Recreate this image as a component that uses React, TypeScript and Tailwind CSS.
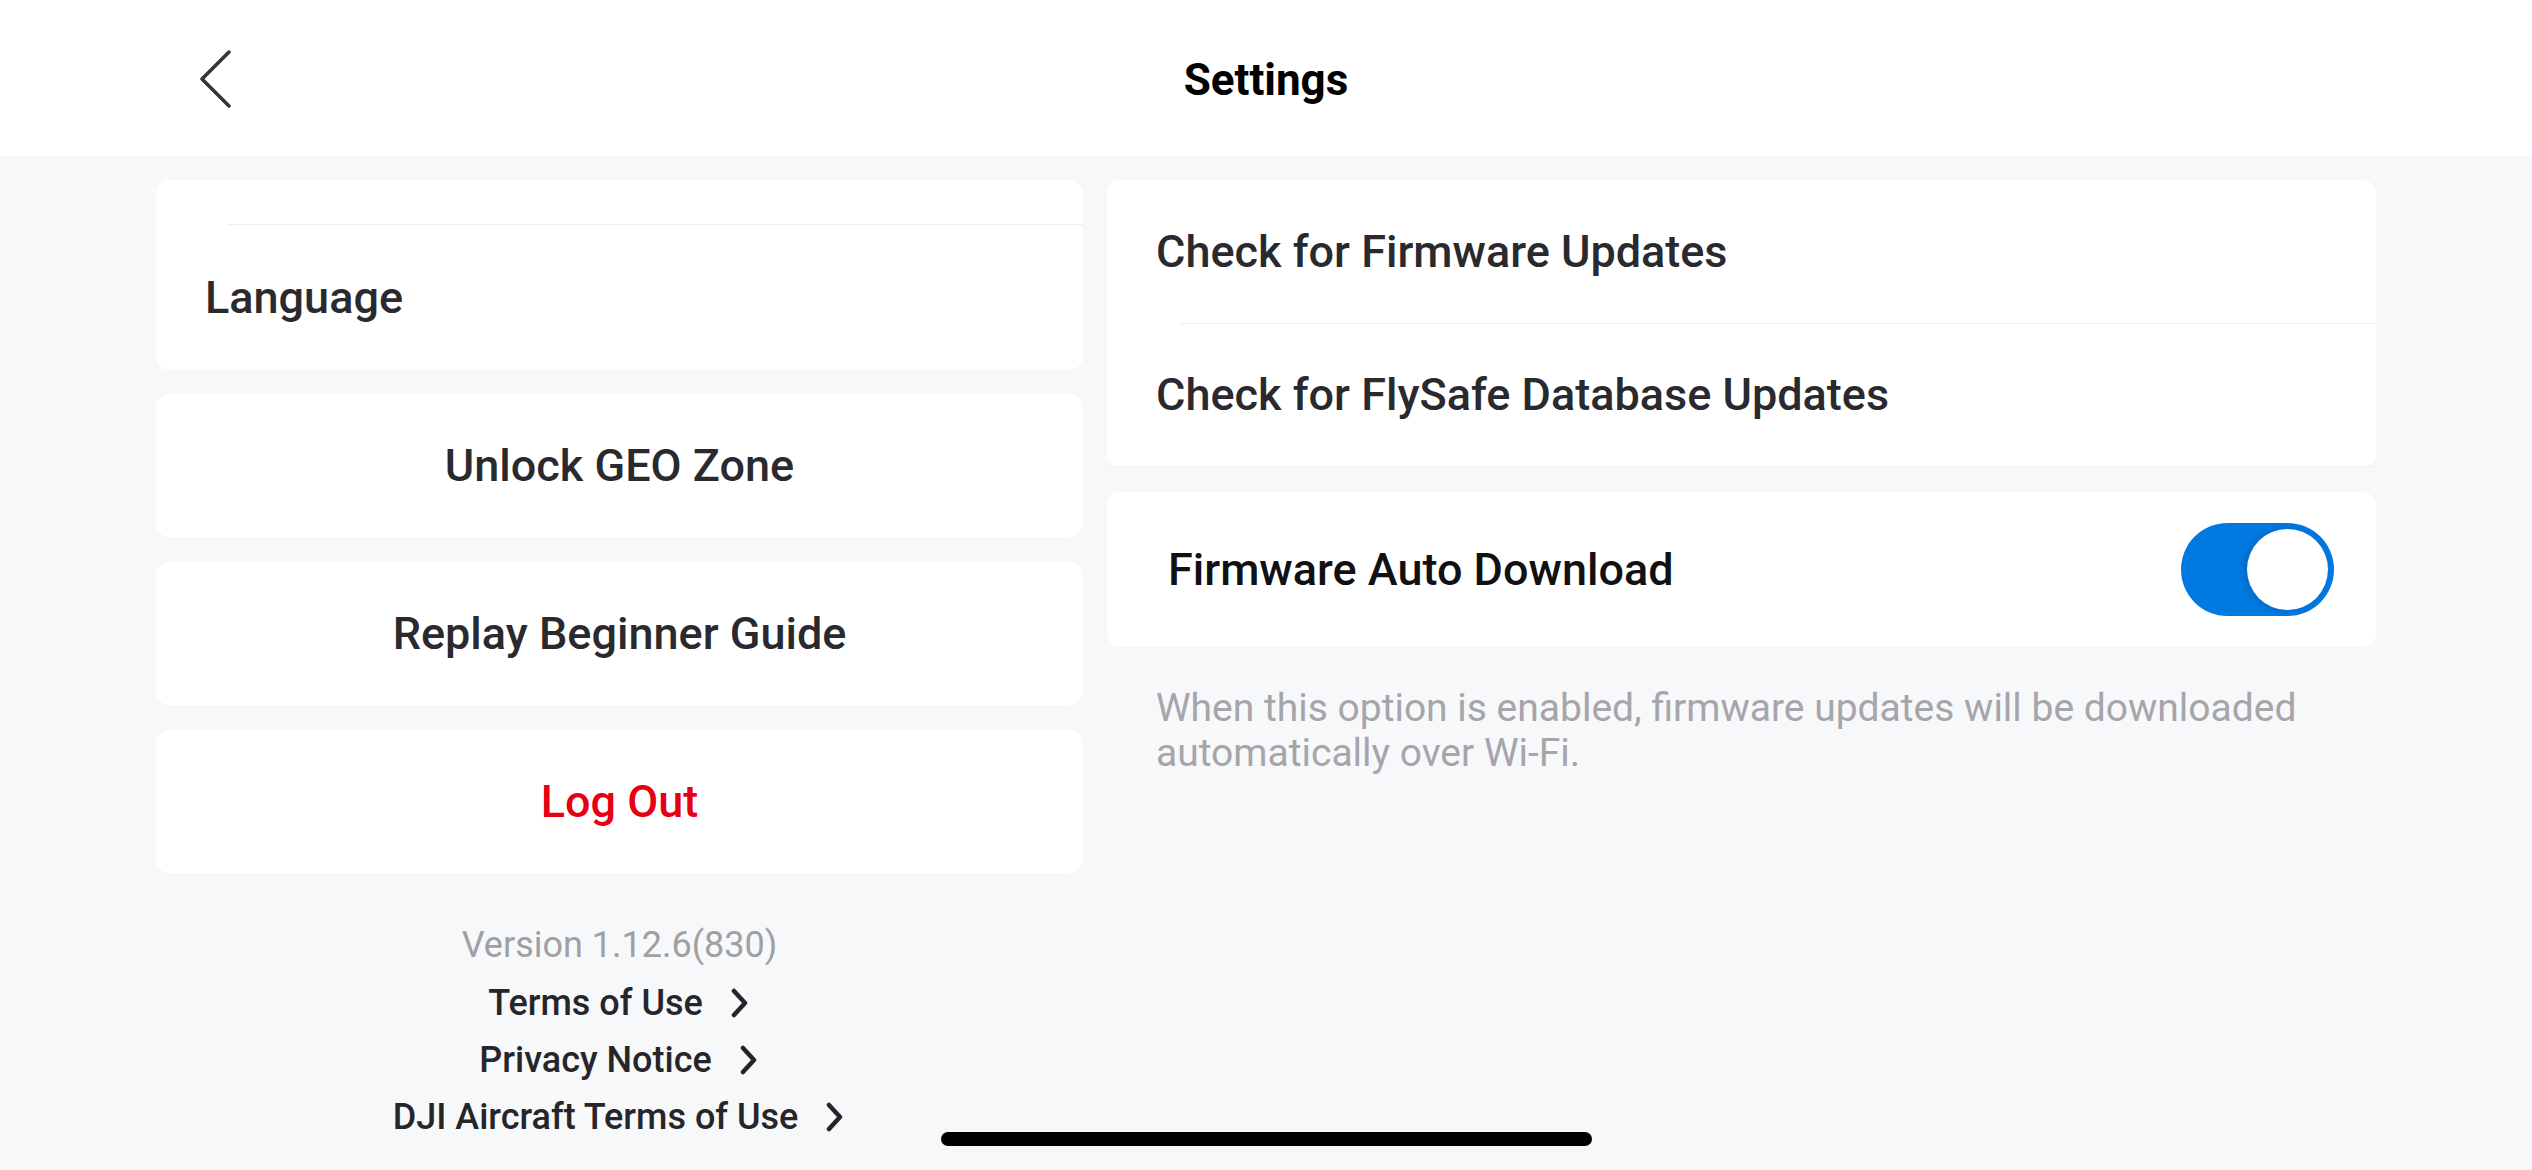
import React from "react";

function BackIcon() {
  return (
    <svg width="34" height="58" viewBox="0 0 34 58" fill="none">
      <path d="M31 2 L4 29 L31 56" stroke="#333338" strokeWidth="3.5" strokeLinecap="round" strokeLinejoin="round" />
    </svg>
  );
}

function ChevronRight() {
  return (
    <svg width="22" height="30" viewBox="0 0 22 30" fill="none">
      <path d="M5 3 L16 15 L5 27" stroke="#26262a" strokeWidth="4.5" strokeLinecap="round" strokeLinejoin="round" />
    </svg>
  );
}

function Toggle({ on }: { on: boolean }) {
  return (
    <div
      className={`w-[153px] h-[93px] rounded-full p-[6px] flex items-center ${
        on ? "bg-[#0079e0] justify-end" : "bg-[#e5e5ea] justify-start"
      }`}
    >
      <div className="w-[81px] h-[81px] rounded-full bg-white shadow-[-3px_0_6px_rgba(0,50,120,0.25)]" />
    </div>
  );
}

function CenterCard({ label, danger }: { label: string; danger?: boolean }) {
  return (
    <div className="h-[143px] bg-white rounded-[14px] flex items-center justify-center">
      <span
        className={`text-[45px] font-medium ${
          danger ? "text-[#e60012]" : "text-[#2a2a2e]"
        }`}
      >
        {label}
      </span>
    </div>
  );
}

const links = ["Terms of Use", "Privacy Notice", "DJI Aircraft Terms of Use"];

export default function App() {
  return (
    <div
      className="w-[2532px] h-[1170px] bg-[#f7f8fa] flex flex-col overflow-hidden"
      style={{ fontFamily: "Roboto, 'Noto Sans', sans-serif" }}
    >
      <header className="h-[156px] bg-white grid grid-cols-[1fr_auto_1fr] items-center shrink-0">
        <div className="pl-[198px] pt-[2px]">
          <BackIcon />
        </div>
        <h1 className="text-[44px] font-bold text-black pt-[3px]">Settings</h1>
        <div />
      </header>

      <main className="flex-1 min-h-0 flex gap-[24px] px-[156px] pt-[24px]">
        <div className="w-[927px] flex flex-col">
          <div className="h-[190px] shrink-0 bg-white rounded-[14px] flex flex-col">
            <div className="h-[45px] border-b border-[#efeff2] ml-[72px]" />
            <div className="flex-1 flex items-center pl-[49px]">
              <span className="text-[45px] font-medium text-[#2a2a2e]">Language</span>
            </div>
          </div>
          <div className="mt-[24px] shrink-0">
            <CenterCard label="Unlock GEO Zone" />
          </div>
          <div className="mt-[25px] shrink-0">
            <CenterCard label="Replay Beginner Guide" />
          </div>
          <div className="mt-[25px] shrink-0">
            <CenterCard label="Log Out" danger />
          </div>

          <div className="flex flex-col items-center pt-[44px] shrink-0">
            <span className="text-[36px] leading-[57px] text-[#9fa0a4]">Version 1.12.6(830)</span>
            {links.map((l) => (
              <a key={l} href="#" className="flex items-center gap-[26px] h-[57px] text-[36px] font-medium text-[#26262a]">
                <span>{l}</span>
                <ChevronRight />
              </a>
            ))}
          </div>
        </div>

        <div className="flex-1 flex flex-col">
          <div className="bg-white rounded-[14px] h-[287px] flex flex-col">
            <div className="h-[143px] flex items-center pl-[49px]">
              <span className="text-[45px] font-medium text-[#2a2a2e]">Check for Firmware Updates</span>
            </div>
            <div className="h-[1px] bg-[#efeff2] ml-[72px]" />
            <div className="h-[143px] flex items-center pl-[49px] border-b border-[#f1f1f3]">
              <span className="text-[45px] font-medium text-[#2a2a2e]">Check for FlySafe Database Updates</span>
            </div>
          </div>

          <div className="mt-[25px] h-[155px] bg-white rounded-[14px] flex items-center justify-between pl-[61px] pr-[42px]">
            <span className="text-[45px] font-medium text-[#111114]">Firmware Auto Download</span>
            <Toggle on />
          </div>

          <p className="mt-[39px] pl-[49px] text-[39px] leading-[45px] text-[#a5a5aa] max-w-[1240px]">
            When this option is enabled, firmware updates will be downloaded automatically over Wi-Fi.
          </p>
        </div>
      </main>

      <div className="h-[38px] shrink-0 flex items-start justify-center">
        <div className="w-[651px] h-[14px] rounded-full bg-black" />
      </div>
    </div>
  );
}
